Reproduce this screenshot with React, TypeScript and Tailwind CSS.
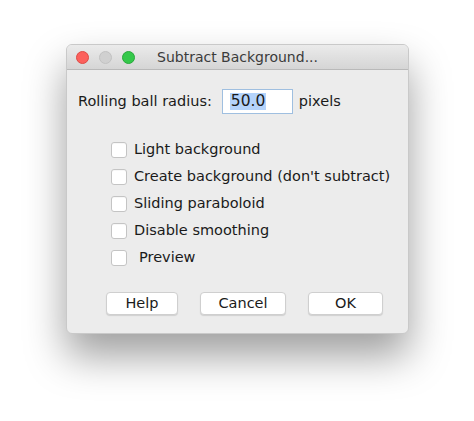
export default function App() {
  const options = [
    'Light background',
    "Create background (don't subtract)",
    'Sliding paraboloid',
    'Disable smoothing',
  ]

  return (
    <div
      className="w-[474px] h-[421px] bg-white pt-[44px] pl-[66px] text-[14.5px] text-[#1a1a1a]"
      style={{ fontFamily: '"DejaVu Sans", "Liberation Sans", sans-serif' }}
    >
      <div className="w-[343px] h-[290px] flex flex-col rounded-[6px] bg-[#ececec] border border-[#c9c9c9] shadow-[0_22px_40px_rgba(0,0,0,0.38)] overflow-hidden">
        {/* title bar */}
        <div className="relative h-[25px] shrink-0 flex items-center justify-center bg-gradient-to-b from-[#ebebeb] to-[#d5d5d5] border-b border-[#b9b9b9]">
          <div className="absolute left-[9px] top-[6px] flex gap-[10px]">
            <span className="w-[13px] h-[13px] rounded-full bg-[#fc605c] border border-[#de4a45]" />
            <span className="w-[13px] h-[13px] rounded-full bg-[#d0d0d0] border border-[#c2c2c2]" />
            <span className="w-[13px] h-[13px] rounded-full bg-[#34c84a] border border-[#28a83b]" />
          </div>
          <span className="text-[14px] text-[#3b3b3b]">Subtract Background...</span>
        </div>

        {/* radius row */}
        <div className="flex items-center pl-[11px] mt-[19px]">
          <span>Rolling ball radius:</span>
          <div className="ml-[10px] w-[71px] h-[25px] bg-white border border-[#9fbfe0] flex items-center pl-[7px]">
            <span className="bg-[#b4d3fb] leading-[17px] px-px text-[15.5px] font-medium">50.0</span>
          </div>
          <span className="ml-[6px]">pixels</span>
        </div>

        {/* checkboxes */}
        <div className="flex flex-col gap-[11px] pl-[44px] mt-[28px]">
          {options.map(o => (
            <label key={o} className="flex items-center gap-[7px] h-[16px]">
              <span className="w-[16px] h-[16px] rounded-[3px] bg-white border border-[#c4c4c4] shadow-[inset_0_1px_0_rgba(0,0,0,0.03)]" />
              <span>{o}</span>
            </label>
          ))}
          <label className="flex items-center gap-[12px] h-[16px]">
            <span className="w-[16px] h-[16px] rounded-[3px] bg-white border border-[#c4c4c4]" />
            <span>Preview</span>
          </label>
        </div>

        {/* buttons */}
        <div className="flex mt-[26px] pl-[39px] gap-[22px]">
          <button className="w-[72px] h-[23px] rounded-[4px] bg-white border border-[#cfcfcf] shadow-[0_1px_1px_rgba(0,0,0,0.12)]">Help</button>
          <button className="w-[86px] h-[23px] rounded-[4px] bg-white border border-[#cfcfcf] shadow-[0_1px_1px_rgba(0,0,0,0.12)]">Cancel</button>
          <button className="w-[75px] h-[23px] rounded-[4px] bg-white border border-[#cfcfcf] shadow-[0_1px_1px_rgba(0,0,0,0.12)]">OK</button>
        </div>
      </div>
    </div>
  )
}
